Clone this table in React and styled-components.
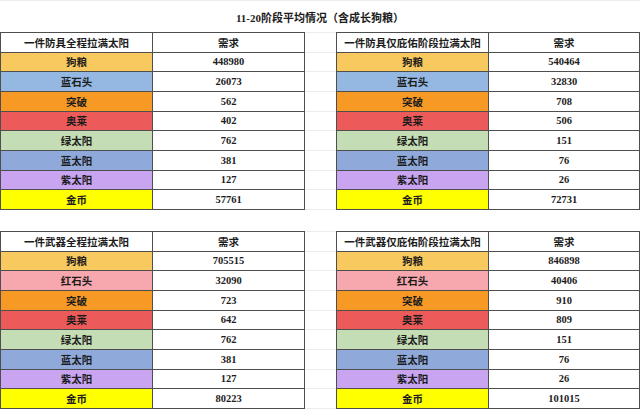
import React from 'react';
import styled, { createGlobalStyle } from 'styled-components';

// data
const colors = {
  狗粮: '#f8c95e',
  蓝石头: '#95b8e2',
  红石头: '#f7a8ae',
  突破: '#f79a25',
  奥莱: '#ec5a5a',
  绿太阳: '#c5ddb4',
  蓝太阳: '#8ea9da',
  紫太阳: '#c9a5f1',
  金币: '#ffff00',
};

const tables = [
  [
    {
      title: '一件防具全程拉满太阳',
      rows: [
        ['狗粮', '448980'],
        ['蓝石头', '26073'],
        ['突破', '562'],
        ['奥莱', '402'],
        ['绿太阳', '762'],
        ['蓝太阳', '381'],
        ['紫太阳', '127'],
        ['金币', '57761'],
      ],
    },
    {
      title: '一件防具仅庇佑阶段拉满太阳',
      rows: [
        ['狗粮', '540464'],
        ['蓝石头', '32830'],
        ['突破', '708'],
        ['奥莱', '506'],
        ['绿太阳', '151'],
        ['蓝太阳', '76'],
        ['紫太阳', '26'],
        ['金币', '72731'],
      ],
    },
  ],
  [
    {
      title: '一件武器全程拉满太阳',
      rows: [
        ['狗粮', '705515'],
        ['红石头', '32090'],
        ['突破', '723'],
        ['奥莱', '642'],
        ['绿太阳', '762'],
        ['蓝太阳', '381'],
        ['紫太阳', '127'],
        ['金币', '80223'],
      ],
    },
    {
      title: '一件武器仅庇佑阶段拉满太阳',
      rows: [
        ['狗粮', '846898'],
        ['红石头', '40406'],
        ['突破', '910'],
        ['奥莱', '809'],
        ['绿太阳', '151'],
        ['蓝太阳', '76'],
        ['紫太阳', '26'],
        ['金币', '101015'],
      ],
    },
  ],
];

// style
const GlobalStyle = createGlobalStyle`
  html, body {
    margin: 0;
    padding: 0;
    background: #ffffff;
  }
  body {
    font-family: "Liberation Serif", "Noto Sans CJK SC", serif;
    color: #1c1c1c;
  }
`;

const Sheet = styled.div`
  width: 640px;
  height: 409px;
  overflow: hidden;
  display: flex;
  flex-direction: column;
  background: #fff;
`;

const Title = styled.div`
  height: 32px;
  flex: none;
  display: flex;
  align-items: center;
  justify-content: center;
  font-size: 11px;
  font-weight: 600;
  border-top: 1px solid #ececec;
  box-sizing: border-box;
`;

const Band = styled.div`
  height: 178px;
  flex: none;
  display: flex;
`;

const Spacer = styled.div`
  height: 21px;
  flex: none;
`;

const Table = styled.div`
  display: grid;
  grid-template-columns: 152px ${(p) => p.$last}px;
  grid-template-rows: repeat(9, 1fr);
  border-top: 1px solid #4e4e4e;
  border-left: 1px solid #4e4e4e;
`;

const Cell = styled.div`
  box-sizing: border-box;
  border-right: 1px solid #4e4e4e;
  border-bottom: 1px solid #4e4e4e;
  background: ${(p) => p.$bg || '#fff'};
  display: flex;
  align-items: center;
  justify-content: center;
  font-size: 10.5px;
  font-weight: 600;
  white-space: nowrap;
`;

const Gutter = styled.div`
  width: 31px;
  flex: none;
  display: grid;
  grid-template-rows: repeat(9, 1fr);
  border-top: 1px solid #ececec;
`;

const GutterCell = styled.div`
  border-bottom: 1px solid #ececec;
`;

const DemandTable = ({ title, rows, last }) => (
  <Table $last={last}>
    <Cell>{title}</Cell>
    <Cell>需求</Cell>
    {rows.map(([name, value]) => (
      <React.Fragment key={name}>
        <Cell $bg={colors[name]}>{name}</Cell>
        <Cell>{value}</Cell>
      </React.Fragment>
    ))}
  </Table>
);

const App = () => (
  <>
    <GlobalStyle />
    <Sheet>
      <Title>11-20阶段平均情况（含成长狗粮）</Title>
      {tables.map((pair, i) => (
        <React.Fragment key={i}>
          {i > 0 && <Spacer />}
          <Band>
            <DemandTable {...pair[0]} last={152} />
            <Gutter>
              {Array.from({ length: 9 }).map((_, j) => (
                <GutterCell key={j} />
              ))}
            </Gutter>
            <DemandTable {...pair[1]} last={151} />
          </Band>
        </React.Fragment>
      ))}
    </Sheet>
  </>
);

export default App;
